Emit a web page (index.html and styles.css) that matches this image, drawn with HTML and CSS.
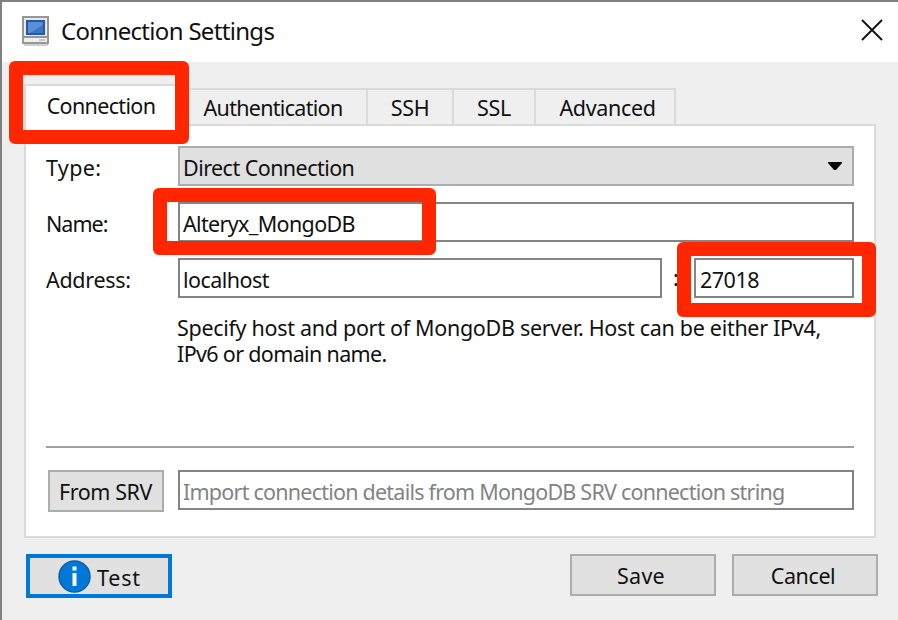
FILE: index.html
```html
<!DOCTYPE html>
<html lang="en">
<head>
<meta charset="utf-8">
<title>Connection Settings</title>
<link rel="stylesheet" href="styles.css">
</head>
<body>
<div class="window">
  <header class="titlebar">
    <svg class="app-icon" width="28" height="30" viewBox="0 0 28 30">
      <path d="M2 29h24" stroke="#cfcfcf" stroke-width="2"/>
      <rect x="1" y="1" width="25" height="20" fill="#e9e9e9" stroke="#969896" stroke-width="2"/>
      <rect x="4" y="4" width="19" height="15" fill="#245ba9"/>
      <path d="M6 6h15v3L9 17H6z" fill="#5c8ed2"/>
      <path d="M21 9v8H9z" fill="#3c75c4"/>
      <rect x="1" y="21" width="25" height="6" fill="#eeeeec" stroke="#969896" stroke-width="2"/>
      <path d="M17 24h6" stroke="#bbb" stroke-width="1.5"/>
    </svg>
    <h1 class="title"><span class="t-title">Connection Settings</span></h1>
    <svg class="close" width="22" height="22" viewBox="0 0 22 22"><path d="M1 1L21 21M21 1L1 21" stroke="#151515" stroke-width="2"/></svg>
  </header>
  <nav class="tabs">
    <div class="tab selected"><span class="t-conn">Connection</span></div>
    <div class="tab auth"><span class="t-auth">Authentication</span></div>
    <div class="tab ssh"><span class="t-ssh">SSH</span></div>
    <div class="tab ssl"><span class="t-ssl">SSL</span></div>
    <div class="tab adv"><span class="t-adv">Advanced</span></div>
  </nav>
  <main class="panel">
    <div class="row">
      <label class="t-type">Type:</label>
      <div class="field select"><span class="t-direct">Direct Connection</span><svg width="14" height="8" viewBox="0 0 14 8"><path d="M0 0h14v1L8 8H6L0 1z"/></svg></div>
    </div>
    <div class="row">
      <label class="t-name">Name:</label>
      <div class="field"><span class="t-alteryx">Alteryx_MongoDB</span></div>
    </div>
    <div class="row">
      <label class="t-address">Address:</label>
      <div class="field"><span class="t-local">localhost</span></div>
      <span class="colon">:</span>
      <div class="field port"><span class="t-port">27018</span></div>
    </div>
    <div class="hint"><div class="t-hint1">Specify host and port of MongoDB server. Host can be either IPv4,</div><div class="t-hint2">IPv6 or domain name.</div></div>
    <div class="rule"></div>
    <div class="srv">
      <div class="button from"><span class="t-from">From SRV</span></div>
      <div class="field placeholder"><span class="t-import">Import connection details from MongoDB SRV connection string</span></div>
    </div>
  </main>
  <footer class="actions">
    <div class="button test">
      <svg width="33" height="33" viewBox="0 0 33 33"><circle cx="16.5" cy="16.5" r="15.5" fill="#0078d7" stroke="#0862a5" stroke-width="1.5"/><path d="M14.5 6.5h4v4h-4zM14.5 13h4v13h-4z" fill="#fff"/></svg>
      <span class="t-test">Test</span>
    </div>
    <div class="button save"><span class="t-save">Save</span></div>
    <div class="button"><span class="t-cancel">Cancel</span></div>
  </footer>
</div>
<div class="mark mark-tab"></div>
<div class="mark mark-name"></div>
<div class="mark mark-port"></div>
</body>
</html>
```
FILE: styles.css
```css
* { box-sizing: border-box; }
body {
  margin: 0;
  width: 898px;
  height: 620px;
  overflow: hidden;
  position: relative;
  font: 21.5px/26px "Noto Sans", sans-serif;
  color: #111;
}
span, label { white-space: nowrap; }
svg { display: block; flex: none; }
.window {
  height: 620px;
  background: #efefef;
  border: solid #808080;
  border-width: 2px 0 0 2px;
}
.titlebar {
  display: flex;
  align-items: center;
  height: 60px;
  padding: 0 15px 0 20px;
  background: #fff;
}
.app-icon { margin-top: -2px; }
.title { margin: -2px auto 0 11px; font-size: 24px; line-height: 30px; font-weight: 400; }
.close { margin-top: -4px; }
.tabs {
  display: flex;
  align-items: flex-end;
  height: 62px;
  padding-left: 22px;
}
.tab {
  height: 36px;
  border: 2px solid #dadada;
  border-width: 2px 2px 0 0;
  padding-top: 5px;
  text-align: center;
}
.tab.selected {
  width: 156px;
  height: 42px;
  border-left-width: 2px;
  padding-top: 7px;
  padding-right: 2px;
  margin-bottom: -2px;
  background: #fff;
  position: relative;
}
.auth { width: 188px; }
.ssh { width: 86px; }
.ssl { width: 82px; }
.adv { width: 140px; padding-left: 5px; }
.panel {
  width: 852px;
  height: 414px;
  margin-left: 22px;
  padding: 20px 20px 0;
  border: 2px solid #dadada;
  background: #fff;
}
.row { display: flex; align-items: center; height: 40px; margin-bottom: 16px; }
.row label { flex: 0 0 132px; padding-top: 3px; }
.field {
  flex: 1;
  height: 40px;
  display: flex;
  align-items: center;
  padding: 3px 2px 0 3px;
  border: 2px solid #848484;
  background: #fff;
}
.select { justify-content: space-between; padding-right: 10px; background: #e0e0e0; border-color: #adadad; }
.select svg { margin-top: -3px; }
.colon { width: 32px; padding-left: 11px; }
.port { flex: 0 0 160px; padding-left: 4px; }
.hint { margin-left: 131px; padding-top: 1px; height: 132px; white-space: nowrap; }
.rule { height: 2px; background: #a0a0a0; }
.srv { display: flex; margin: 22px 0 0 2px; gap: 14px; }
.placeholder { color: #838383; }
.button {
  display: flex;
  justify-content: center;
  align-items: center;
  width: 146px;
  height: 42px;
  padding: 2px 4px 0 0;
  border: 2px solid #adadad;
  background: #e1e1e1;
}
.from { width: 116px; padding-right: 1px; }
.actions { display: flex; align-items: flex-start; gap: 16px; margin: 16px 20px 0 24px; }
.test { height: 44px; border: 4px solid #0078d7; gap: 6px; padding: 0 0 0 1px; }
.test span { padding-top: 4px; }
.save { margin-left: auto; }
.mark { position: absolute; border: 14px solid #ff2600; border-radius: 6px; }
.mark-tab { left: 9px; top: 61px; width: 180px; height: 83px; }
.mark-name { left: 153px; top: 188px; width: 283px; height: 67px; }
.mark-port { left: 677px; top: 242px; width: 199px; height: 75px; }

/* Tracking per label, giving the compact dialog lettering */
.t-title { letter-spacing: -0.68px; }
.t-conn { letter-spacing: -0.65px; }
.t-auth { letter-spacing: -0.7px; }
.t-ssh, .t-ssl { letter-spacing: -0.3px; }
.t-adv { letter-spacing: -0.35px; }
.t-type { letter-spacing: 0.35px; }
.t-name { letter-spacing: -1px; }
.t-address { letter-spacing: -0.3px; }
.t-direct { letter-spacing: -0.55px; }
.t-alteryx { letter-spacing: -0.65px; }
.t-local { letter-spacing: -0.55px; }
.t-port { letter-spacing: -0.5px; }
.t-hint1 { letter-spacing: -0.3px; }
.t-hint2 { letter-spacing: -0.66px; }
.t-from { letter-spacing: -0.4px; }
.t-import { letter-spacing: -0.77px; }
.t-test { letter-spacing: 0.8px; }
.t-save { letter-spacing: 0.3px; }
.t-cancel { letter-spacing: -0.4px; }
```
